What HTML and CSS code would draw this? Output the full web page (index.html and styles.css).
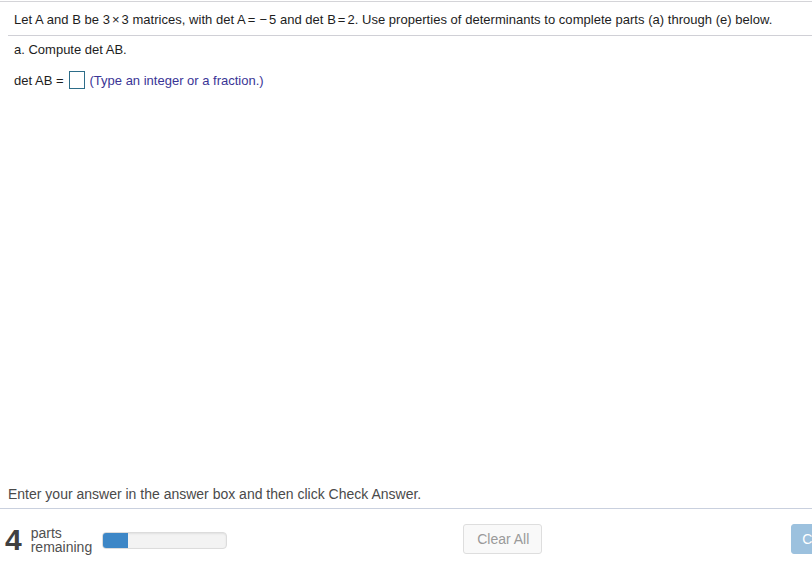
FILE: index.html
```html
<!DOCTYPE html>
<html>
<head>
<meta charset="utf-8">
<link rel="stylesheet" href="styles.css">
</head>
<body>
<div class="page">
  <div class="question">
    <div class="stem">Let A and B be 3<span class="op">×</span>3 matrices, with det A<span class="op">=</span><span class="op">−</span>5 and det B<span class="op">=</span>2. Use properties of determinants to complete parts (a) through (e) below.</div>
    <div class="part">
      <div class="part-title">a. Compute det AB.</div>
      <div class="answer-row">
        <span>det AB =</span>
        <span class="answer-box"></span>
        <span class="hint">(Type an integer or a fraction.)</span>
      </div>
    </div>
  </div>
  <div class="instructions">Enter your answer in the answer box and then click Check Answer.</div>
  <div class="footer">
    <div class="remaining">
      <span class="count">4</span>
      <span class="label">parts<br>remaining</span>
    </div>
    <div class="progress"><div class="progress-fill" style="width:20%"></div></div>
    <button class="btn btn-clear">Clear All</button>
    <button class="btn btn-check">Check Answer</button>
  </div>
</div>
</body>
</html>
```

FILE: styles.css
```css
html, body {
  margin: 0;
  padding: 0;
  background: #fff;
}
body {
  font-family: "Liberation Sans", Arial, sans-serif;
  overflow: hidden;
  width: 812px;
  height: 570px;
}
.page {
  height: 570px;
  display: flex;
  flex-direction: column;
  padding-top: 1px;
  box-sizing: border-box;
}
.question {
  flex: 1;
  border-top: 1px solid #d4d4d8;
}
.stem {
  font-size: 13px;
  color: #1d1d1d;
  line-height: 15px;
  padding: 10px 0 8px 6px;
  margin-left: 8px;
  border-bottom: 1px solid #d0d0d6;
  white-space: nowrap;
  letter-spacing: 0.03px;
}
.stem .op {
  padding: 0 2px;
}
.part {
  padding-left: 14px;
  font-size: 13px;
  color: #1d1d1d;
}
.part-title {
  line-height: 15px;
  padding-top: 6px;
}
.answer-row {
  display: flex;
  align-items: center;
  margin-top: 14px;
  line-height: 15px;
}
.answer-box {
  display: inline-block;
  width: 14px;
  height: 16px;
  border: 1px solid #2d6d89;
  margin: 0 5px 0 5px;
}
.hint {
  color: #3a3596;
}
.instructions {
  font-size: 14px;
  color: #4a4a4a;
  padding: 0 0 6px 8px;
  line-height: 16px;
  border-bottom: 1px solid #c9d0de;
}
.footer {
  height: 61px;
  display: flex;
  align-items: center;
  padding-left: 5px;
  white-space: nowrap;
  overflow: hidden;
}
.footer > * {
  flex-shrink: 0;
}
.remaining {
  display: flex;
  align-items: center;
}
.count {
  font-size: 30px;
  font-weight: bold;
  color: #404040;
  line-height: 30px;
}
.label {
  font-size: 14px;
  line-height: 14px;
  color: #505050;
  margin-left: 9px;
  padding-top: 1px;
}
.progress {
  width: 123px;
  height: 15px;
  margin-left: 10px;
  margin-top: 1px;
  border: 1px solid #dcdcdc;
  border-radius: 4px;
  background: #f3f3f3;
  box-shadow: inset 0 1px 2px rgba(0,0,0,0.08);
  overflow: hidden;
}
.progress-fill {
  height: 100%;
  background: #3d87c7;
}
.btn {
  font-family: "Liberation Sans", Arial, sans-serif;
  font-size: 14px;
  height: 30px;
  border-radius: 3px;
  padding: 0 13px;
  margin-top: -1px;
}
.btn-clear {
  margin-left: 236px;
  width: 79px;
  background: #f9f9f9;
  border: 1px solid #dedede;
  color: #9a9a9a;
}
.btn-check {
  margin-left: 249px;
  background: #9cc1de;
  border: 1px solid #9cc1de;
  color: #fff;
  padding: 0 10px;
}
```
